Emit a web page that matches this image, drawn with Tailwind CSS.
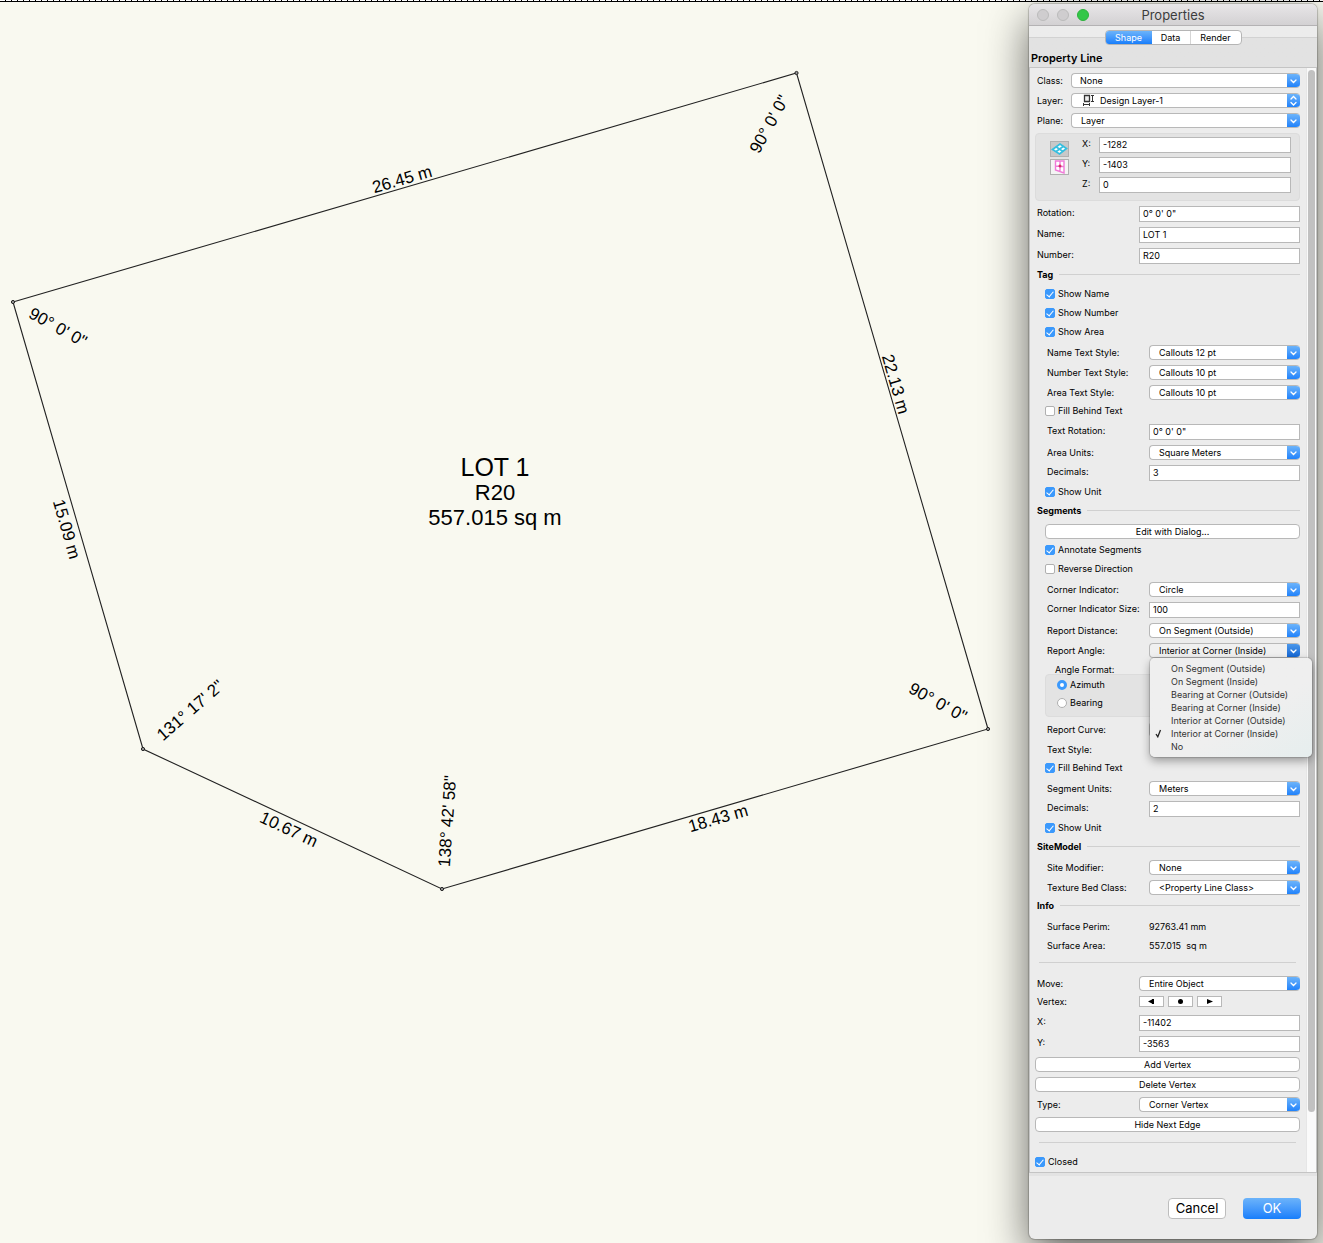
<!DOCTYPE html>
<html lang="en">
  <head>
    <meta charset="UTF-8" />
    <meta name="viewport" content="width=device-width, initial-scale=1.0" />
    <title>Properties</title>
    <script src="https://cdn.jsdelivr.net/npm/@tailwindcss/browser@4"></script>
  </head>
  <body class="min-h-screen overflow-x-hidden bg-[#f9f9f0] font-['Inter',sans-serif] text-black">
    <!-- Icons shared by the controls -->
    <svg class="hidden">
      <symbol id="chevron" viewBox="0 0 13 14">
        <path d="M4 6l2.500 2.500L9 6" fill="none" stroke="#fff" stroke-width="1.300" stroke-linecap="round" />
      </symbol>
      <symbol id="updown" viewBox="0 0 13 14">
        <path d="M4 5l2.500-2.500L9 5M4 8.500l2.500 2.500L9 8.500" fill="none" stroke="#fff" stroke-width="1.300" stroke-linecap="round" />
      </symbol>
    </svg>

    <!-- Ruler -->
    <div class="h-1">
      <svg class="block h-[2px] w-full" shape-rendering="crispEdges">
        <defs>
          <pattern id="ticks" width="6" height="2" patternUnits="userSpaceOnUse">
            <rect width="6" height="2" fill="#fff" />
            <rect x="5" width="1" height="1" />
            <rect y="1" width="6" height="1" />
          </pattern>
        </defs>
        <rect width="100%" height="2" fill="url(#ticks)" />
      </svg>
    </div>

    <div class="flex items-start">
      <!-- Drawing -->
      <main class="min-w-0 flex-1">
        <svg viewBox="0 4 1029 1235" class="block h-auto w-full font-['Liberation_Sans',Arial,sans-serif] text-[17px]">
          <path d="M13 302L796.500 73L988 729L442 889L143 749Z" fill="none" stroke="#222" stroke-width="1.100" />
          <g fill="#999" stroke="#222">
            <circle cx="13" cy="302" r="1.600" />
            <circle cx="796.500" cy="73" r="1.600" />
            <circle cx="988" cy="729" r="1.600" />
            <circle cx="442" cy="889" r="1.600" />
            <circle cx="143" cy="749" r="1.600" />
          </g>
          <g text-anchor="middle">
            <text transform="translate(402 179) rotate(-16)" dy="6">26.45 m</text>
            <text transform="translate(896 384) rotate(74)" dy="6">22.13 m</text>
            <text transform="translate(67 529) rotate(74)" dy="6">15.09 m</text>
            <text transform="translate(289 829) rotate(25)" dy="6">10.67 m</text>
            <text transform="translate(718 818) rotate(-16)" dy="6">18.43 m</text>
            <text transform="translate(58 327) rotate(29)" dy="6">90° 0' 0"</text>
            <text transform="translate(769 124) rotate(-61)" dy="6">90° 0' 0"</text>
            <text transform="translate(938 702) rotate(29)" dy="6">90° 0' 0"</text>
            <text transform="translate(190 710) rotate(-41)" dy="6">131° 17' 2"</text>
            <text transform="translate(447 821) rotate(-86)" dy="6">138° 42' 58"</text>
            <text x="495" y="476" class="text-[25px]">LOT 1</text>
            <text x="495" y="500" class="text-[22px]">R20</text>
            <text x="495" y="525" class="text-[22px]">557.015 sq m</text>
          </g>
        </svg>
      </main>

      <!-- Properties window -->
      <aside class="relative mr-[6px] mb-1 w-72 shrink-0 rounded-md bg-[#ececec] text-[9px] leading-[11px] shadow-[0_16px_44px_rgba(0,0,0,0.6),0_0_1px_1px_rgba(0,0,0,0.2)]">
        <header class="flex h-[22px] items-center rounded-t-md border-b border-[#b4b2b4] bg-linear-to-b from-[#e8e6e8] to-[#d3d1d3] px-2">
          <div class="flex flex-1 gap-2">
            <span class="size-3 rounded-full border border-[#bbb] bg-[#cfcdcf]"></span>
            <span class="size-3 rounded-full border border-[#bbb] bg-[#cfcdcf]"></span>
            <span class="size-3 rounded-full border border-[#2bb23c] bg-[#33c748]"></span>
          </div>
          <h1 class="text-[13px] leading-5 text-[#3c3c3c]">Properties</h1>
          <div class="flex-1"></div>
        </header>

        <div class="bg-linear-to-b from-[#ececec] from-[12px] to-[#e2e2e2] to-[12px]">
          <nav class="flex h-[23px] items-center">
            <span class="h-px flex-1 bg-[#d2d2d2]"></span>
            <div class="flex h-[15px] overflow-hidden rounded border border-[#b5b5b5] bg-white">
              <button class="w-[46px] bg-linear-to-b from-[#6bb3fa] to-[#157efb] text-white">Shape</button>
              <button class="w-[39px] border-r border-[#d5d5d5]">Data</button>
              <button class="w-[50px]">Render</button>
            </div>
            <span class="h-px flex-1 bg-[#d2d2d2]"></span>
          </nav>
          <h2 class="h-[18px] pl-[2px] text-[11px] font-semibold leading-[18px]">Property Line</h2>
        </div>

        <div class="flex border border-[#c4c4c4]">
          <form class="min-w-0 flex-1 pt-[5px] pr-[6px] pb-[5px] pl-[5px]">
            <div class="mb-[5px] flex h-[15px] items-center">
              <label for="class" class="w-9 pl-[2px]">Class:</label>
              <div class="flex h-[15px] flex-1 overflow-hidden rounded border border-r-0 border-[#b8b8b8] bg-white">
                <select id="class" class="min-w-0 flex-1 appearance-none pl-2"><option>None</option></select>
                <svg class="h-[14px] w-[13px] bg-linear-to-b from-[#6bb3fa] to-[#157efb]"><use href="#chevron" /></svg>
              </div>
            </div>
            <div class="mb-[5px] flex h-[15px] items-center">
              <label for="layer" class="w-9 pl-[2px]">Layer:</label>
              <div class="flex h-[15px] flex-1 overflow-hidden rounded border border-r-0 border-[#b8b8b8] bg-white">
                <svg class="ml-[10px] h-3 w-3" viewBox="0 0 12 12" fill="none" stroke="#333">
                  <path d="M2.500 1.500h5v6h-5z" fill="#eee" stroke-width="1.300" />
                  <path d="M10.500 1v7M9 1.500h3M9 7.500h3M1 10.500h7M1.500 9v3M7.500 9v3" />
                </svg>
                <select id="layer" class="min-w-0 flex-1 appearance-none pl-[6px]"><option>Design Layer-1</option></select>
                <svg class="h-[14px] w-[13px] bg-linear-to-b from-[#6bb3fa] to-[#157efb]"><use href="#updown" /></svg>
              </div>
            </div>
            <div class="mb-[5px] flex h-[15px] items-center">
              <label for="plane" class="w-9 pl-[2px]">Plane:</label>
              <div class="flex h-[15px] flex-1 overflow-hidden rounded border border-r-0 border-[#b8b8b8] bg-white">
                <select id="plane" class="min-w-0 flex-1 appearance-none pl-[9px]"><option>Layer</option></select>
                <svg class="h-[14px] w-[13px] bg-linear-to-b from-[#6bb3fa] to-[#157efb]"><use href="#chevron" /></svg>
              </div>
            </div>

            <!-- Position -->
            <div class="mb-[5px] flex h-[68px] rounded border border-[#dcdcdc] bg-[#e3e3e3] pt-[3px] pr-2 pl-[14px]">
              <div class="flex w-8 flex-col gap-[2px] pt-1">
                <button type="button" aria-label="Layer plane" class="h-4 w-[19px] border border-[#b0b0b0] bg-[#c8c8c8]">
                  <svg class="h-[14px] w-[17px]" viewBox="0 0 17 14">
                    <path d="M1.500 7.500L9 2l6.500 4.500L8.500 12z" fill="#fff" stroke="#35bfe0" stroke-width="1.700" />
                    <path d="M5 4.800l7 4.700M12.500 4.200L4.800 9.700" stroke="#35bfe0" stroke-width="1.700" />
                  </svg>
                </button>
                <button type="button" aria-label="Screen plane" class="h-4 w-[19px] border border-[#b0b0b0] bg-[#f4f4f4]">
                  <svg class="h-[14px] w-[17px]" viewBox="0 0 17 14">
                    <path d="M4.500 1h8.500v12l-8.500-3zM9 1v11M4.500 6L13 6.500" fill="#fff" stroke="#f07ad8" stroke-width="1.400" />
                    <path d="M7.500 6h3M9 4.500v3" stroke="#d0103c" />
                  </svg>
                </button>
              </div>
              <div class="flex flex-1 flex-col gap-1">
                <div class="flex h-4 leading-[14px]"><label for="px" class="w-[17px]">X:</label><input id="px" value="-1282" class="h-4 min-w-0 flex-1 border border-[#b8b8b8] bg-white px-[3px] pb-[2px] leading-3" /></div>
                <div class="flex h-4 leading-[14px]"><label for="py" class="w-[17px]">Y:</label><input id="py" value="-1403" class="h-4 min-w-0 flex-1 border border-[#b8b8b8] bg-white px-[3px] pb-[2px] leading-3" /></div>
                <div class="flex h-4 leading-[14px]"><label for="pz" class="w-[17px]">Z:</label><input id="pz" value="0" class="h-4 min-w-0 flex-1 border border-[#b8b8b8] bg-white px-[3px] pb-[2px] leading-3" /></div>
              </div>
            </div>

            <div class="mb-[5px] flex h-4 leading-[14px]"><label for="rotation" class="w-[104px] pl-[2px]">Rotation:</label><input id="rotation" value="0° 0' 0&quot;" class="h-4 min-w-0 flex-1 border border-[#b8b8b8] bg-white px-[3px] pb-[2px] leading-3" /></div>
            <div class="mb-[5px] flex h-4 leading-[14px]"><label for="name" class="w-[104px] pl-[2px]">Name:</label><input id="name" value="LOT 1" class="h-4 min-w-0 flex-1 border border-[#b8b8b8] bg-white px-[3px] pb-[2px] leading-3" /></div>
            <div class="mb-[5px] flex h-4 leading-[14px]"><label for="number" class="w-[104px] pl-[2px]">Number:</label><input id="number" value="R20" class="h-4 min-w-0 flex-1 border border-[#b8b8b8] bg-white px-[3px] pb-[2px] leading-3" /></div>

            <!-- Tag -->
            <h3 class="mb-2 flex h-[11px] items-center gap-[6px] pl-[2px] font-bold">Tag <span class="h-px flex-1 bg-[#d0d0d0]"></span></h3>
            <label class="mb-2 ml-[10px] flex h-[11px] items-center gap-[3px]"><input type="checkbox" checked class="flex size-[10px] appearance-none justify-center rounded-[2px] border border-[#b0b0b0] bg-white checked:border-[#3b99fc] checked:bg-[#3b99fc] checked:before:h-[7px] checked:before:w-1 checked:before:rotate-40 checked:before:border-r checked:before:border-b checked:before:border-white checked:before:content-['']" />Show Name</label>
            <label class="mb-2 ml-[10px] flex h-[11px] items-center gap-[3px]"><input type="checkbox" checked class="flex size-[10px] appearance-none justify-center rounded-[2px] border border-[#b0b0b0] bg-white checked:border-[#3b99fc] checked:bg-[#3b99fc] checked:before:h-[7px] checked:before:w-1 checked:before:rotate-40 checked:before:border-r checked:before:border-b checked:before:border-white checked:before:content-['']" />Show Number</label>
            <label class="mb-2 ml-[10px] flex h-[11px] items-center gap-[3px]"><input type="checkbox" checked class="flex size-[10px] appearance-none justify-center rounded-[2px] border border-[#b0b0b0] bg-white checked:border-[#3b99fc] checked:bg-[#3b99fc] checked:before:h-[7px] checked:before:w-1 checked:before:rotate-40 checked:before:border-r checked:before:border-b checked:before:border-white checked:before:content-['']" />Show Area</label>
            <div class="mb-[5px] flex h-[15px] items-center">
              <label for="name-style" class="w-[114px] pl-3">Name Text Style:</label>
              <div class="flex h-[15px] flex-1 overflow-hidden rounded border border-r-0 border-[#b8b8b8] bg-white">
                <select id="name-style" class="min-w-0 flex-1 appearance-none pl-[9px]"><option>Callouts 12 pt</option></select>
                <svg class="h-[14px] w-[13px] bg-linear-to-b from-[#6bb3fa] to-[#157efb]"><use href="#chevron" /></svg>
              </div>
            </div>
            <div class="mb-[5px] flex h-[15px] items-center">
              <label for="number-style" class="w-[114px] pl-3">Number Text Style:</label>
              <div class="flex h-[15px] flex-1 overflow-hidden rounded border border-r-0 border-[#b8b8b8] bg-white">
                <select id="number-style" class="min-w-0 flex-1 appearance-none pl-[9px]"><option>Callouts 10 pt</option></select>
                <svg class="h-[14px] w-[13px] bg-linear-to-b from-[#6bb3fa] to-[#157efb]"><use href="#chevron" /></svg>
              </div>
            </div>
            <div class="mb-[5px] flex h-[15px] items-center">
              <label for="area-style" class="w-[114px] pl-3">Area Text Style:</label>
              <div class="flex h-[15px] flex-1 overflow-hidden rounded border border-r-0 border-[#b8b8b8] bg-white">
                <select id="area-style" class="min-w-0 flex-1 appearance-none pl-[9px]"><option>Callouts 10 pt</option></select>
                <svg class="h-[14px] w-[13px] bg-linear-to-b from-[#6bb3fa] to-[#157efb]"><use href="#chevron" /></svg>
              </div>
            </div>
            <label class="mb-2 ml-[10px] flex h-[11px] items-center gap-[3px]"><input type="checkbox" class="flex size-[10px] appearance-none justify-center rounded-[2px] border border-[#b0b0b0] bg-white checked:border-[#3b99fc] checked:bg-[#3b99fc] checked:before:h-[7px] checked:before:w-1 checked:before:rotate-40 checked:before:border-r checked:before:border-b checked:before:border-white checked:before:content-['']" />Fill Behind Text</label>
            <div class="mb-[5px] flex h-4 leading-[14px]"><label for="text-rotation" class="w-[114px] pl-3">Text Rotation:</label><input id="text-rotation" value="0° 0' 0&quot;" class="h-4 min-w-0 flex-1 border border-[#b8b8b8] bg-white px-[3px] pb-[2px] leading-3" /></div>
            <div class="mb-[5px] flex h-[15px] items-center">
              <label for="area-units" class="w-[114px] pl-3">Area Units:</label>
              <div class="flex h-[15px] flex-1 overflow-hidden rounded border border-r-0 border-[#b8b8b8] bg-white">
                <select id="area-units" class="min-w-0 flex-1 appearance-none pl-[9px]"><option>Square Meters</option></select>
                <svg class="h-[14px] w-[13px] bg-linear-to-b from-[#6bb3fa] to-[#157efb]"><use href="#chevron" /></svg>
              </div>
            </div>
            <div class="mb-[5px] flex h-4 leading-[14px]"><label for="area-decimals" class="w-[114px] pl-3">Decimals:</label><input id="area-decimals" value="3" class="h-4 min-w-0 flex-1 border border-[#b8b8b8] bg-white px-[3px] pb-[2px] leading-3" /></div>
            <label class="mb-2 ml-[10px] flex h-[11px] items-center gap-[3px]"><input type="checkbox" checked class="flex size-[10px] appearance-none justify-center rounded-[2px] border border-[#b0b0b0] bg-white checked:border-[#3b99fc] checked:bg-[#3b99fc] checked:before:h-[7px] checked:before:w-1 checked:before:rotate-40 checked:before:border-r checked:before:border-b checked:before:border-white checked:before:content-['']" />Show Unit</label>

            <!-- Segments -->
            <h3 class="mb-2 flex h-[11px] items-center gap-[6px] pl-[2px] font-bold">Segments <span class="h-px flex-1 bg-[#d0d0d0]"></span></h3>
            <div class="mb-[5px] flex pl-[10px]"><button type="button" class="h-[15px] flex-1 rounded border border-[#b8b8b8] bg-white">Edit with Dialog...</button></div>
            <label class="mb-2 ml-[10px] flex h-[11px] items-center gap-[3px]"><input type="checkbox" checked class="flex size-[10px] appearance-none justify-center rounded-[2px] border border-[#b0b0b0] bg-white checked:border-[#3b99fc] checked:bg-[#3b99fc] checked:before:h-[7px] checked:before:w-1 checked:before:rotate-40 checked:before:border-r checked:before:border-b checked:before:border-white checked:before:content-['']" />Annotate Segments</label>
            <label class="mb-2 ml-[10px] flex h-[11px] items-center gap-[3px]"><input type="checkbox" class="flex size-[10px] appearance-none justify-center rounded-[2px] border border-[#b0b0b0] bg-white checked:border-[#3b99fc] checked:bg-[#3b99fc] checked:before:h-[7px] checked:before:w-1 checked:before:rotate-40 checked:before:border-r checked:before:border-b checked:before:border-white checked:before:content-['']" />Reverse Direction</label>
            <div class="mb-[5px] flex h-[15px] items-center">
              <label for="corner" class="w-[114px] pl-3">Corner Indicator:</label>
              <div class="flex h-[15px] flex-1 overflow-hidden rounded border border-r-0 border-[#b8b8b8] bg-white">
                <select id="corner" class="min-w-0 flex-1 appearance-none pl-[9px]"><option>Circle</option></select>
                <svg class="h-[14px] w-[13px] bg-linear-to-b from-[#6bb3fa] to-[#157efb]"><use href="#chevron" /></svg>
              </div>
            </div>
            <div class="mb-[5px] flex h-4 leading-[14px]"><label for="corner-size" class="w-[114px] pl-3 whitespace-nowrap">Corner Indicator Size:</label><input id="corner-size" value="100" class="h-4 min-w-0 flex-1 border border-[#b8b8b8] bg-white px-[3px] pb-[2px] leading-3" /></div>
            <div class="mb-[5px] flex h-[15px] items-center">
              <label for="distance" class="w-[114px] pl-3">Report Distance:</label>
              <div class="flex h-[15px] flex-1 overflow-hidden rounded border border-r-0 border-[#b8b8b8] bg-white">
                <select id="distance" class="min-w-0 flex-1 appearance-none pl-[9px]"><option>On Segment (Outside)</option></select>
                <svg class="h-[14px] w-[13px] bg-linear-to-b from-[#6bb3fa] to-[#157efb]"><use href="#chevron" /></svg>
              </div>
            </div>
            <div class="mb-[5px] flex h-[15px] items-center">
              <label for="angle" class="w-[114px] pl-3">Report Angle:</label>
              <div class="relative flex-1">
                <div class="flex h-[15px] overflow-hidden rounded border border-r-0 border-[#b8b8b8] bg-[#f0f0f0]">
                  <select id="angle" class="min-w-0 flex-1 appearance-none pl-[9px]"><option>Interior at Corner (Inside)</option></select>
                  <svg class="h-[14px] w-[13px] bg-linear-to-b from-[#4a97ea] to-[#0d62d2]"><use href="#chevron" /></svg>
                </div>
                <!-- Open menu of the angle list -->
                <ul class="absolute top-[15px] -right-3 left-px z-10 rounded-[5px] bg-linear-to-br from-[#efefef] from-60% to-[#e6eeee] py-1 leading-[13px] whitespace-nowrap text-[#333] shadow-[0_4px_10px_rgba(0,0,0,0.35),0_0_1px_1px_rgba(0,0,0,0.15)]">
                  <li class="pl-[21px]">On Segment (Outside)</li>
                  <li class="pl-[21px]">On Segment (Inside)</li>
                  <li class="pl-[21px]">Bearing at Corner (Outside)</li>
                  <li class="pl-[21px]">Bearing at Corner (Inside)</li>
                  <li class="pl-[21px]">Interior at Corner (Outside)</li>
                  <li class="flex items-center pl-[5px]">
                    <svg class="mr-[9px] h-[9px] w-[7px]" viewBox="0 0 7 9"><path d="M1 5l1.800 2.800L5.500 1" fill="none" stroke="#222" stroke-width="1.300" /></svg>
                    Interior at Corner (Inside)
                  </li>
                  <li class="pl-[21px]">No</li>
                </ul>
              </div>
            </div>
            <fieldset class="mb-[5px] ml-[10px]">
              <legend class="h-[11px] pl-[10px] leading-[14px]">Angle Format:</legend>
              <div class="flex h-[43px] flex-col gap-[7px] rounded border border-[#dcdcdc] bg-[#e3e3e3] pt-1 pl-[11px]">
                <label class="flex h-[11px] items-center gap-[3px]"><input type="radio" name="format" checked class="size-[10px] appearance-none rounded-full border border-[#b0b0b0] bg-white checked:border-[3px] checked:border-[#3b99fc]" />Azimuth</label>
                <label class="flex h-[11px] items-center gap-[3px]"><input type="radio" name="format" class="size-[10px] appearance-none rounded-full border border-[#b0b0b0] bg-white checked:border-[3px] checked:border-[#3b99fc]" />Bearing</label>
              </div>
            </fieldset>
            <div class="mb-[5px] flex h-[15px] items-center">
              <label for="curve" class="w-[114px] pl-3">Report Curve:</label>
              <div class="flex h-[15px] flex-1 overflow-hidden rounded border border-r-0 border-[#b8b8b8] bg-white">
                <select id="curve" class="min-w-0 flex-1 appearance-none pl-[9px]"><option></option></select>
                <svg class="h-[14px] w-[13px] bg-linear-to-b from-[#6bb3fa] to-[#157efb]"><use href="#chevron" /></svg>
              </div>
            </div>
            <p class="mb-[5px] h-[15px] pl-3 leading-[15px]">Text Style:</p>
            <label class="mb-2 ml-[10px] flex h-[11px] items-center gap-[3px]"><input type="checkbox" checked class="flex size-[10px] appearance-none justify-center rounded-[2px] border border-[#b0b0b0] bg-white checked:border-[#3b99fc] checked:bg-[#3b99fc] checked:before:h-[7px] checked:before:w-1 checked:before:rotate-40 checked:before:border-r checked:before:border-b checked:before:border-white checked:before:content-['']" />Fill Behind Text</label>
            <div class="mb-[5px] flex h-[15px] items-center">
              <label for="segment-units" class="w-[114px] pl-3">Segment Units:</label>
              <div class="flex h-[15px] flex-1 overflow-hidden rounded border border-r-0 border-[#b8b8b8] bg-white">
                <select id="segment-units" class="min-w-0 flex-1 appearance-none pl-[9px]"><option>Meters</option></select>
                <svg class="h-[14px] w-[13px] bg-linear-to-b from-[#6bb3fa] to-[#157efb]"><use href="#chevron" /></svg>
              </div>
            </div>
            <div class="mb-[5px] flex h-4 leading-[14px]"><label for="segment-decimals" class="w-[114px] pl-3">Decimals:</label><input id="segment-decimals" value="2" class="h-4 min-w-0 flex-1 border border-[#b8b8b8] bg-white px-[3px] pb-[2px] leading-3" /></div>
            <label class="mb-2 ml-[10px] flex h-[11px] items-center gap-[3px]"><input type="checkbox" checked class="flex size-[10px] appearance-none justify-center rounded-[2px] border border-[#b0b0b0] bg-white checked:border-[#3b99fc] checked:bg-[#3b99fc] checked:before:h-[7px] checked:before:w-1 checked:before:rotate-40 checked:before:border-r checked:before:border-b checked:before:border-white checked:before:content-['']" />Show Unit</label>

            <!-- Site model -->
            <h3 class="mb-2 flex h-[11px] items-center gap-[6px] pl-[2px] font-bold">SiteModel <span class="h-px flex-1 bg-[#d0d0d0]"></span></h3>
            <div class="mb-[5px] flex h-[15px] items-center">
              <label for="modifier" class="w-[114px] pl-3">Site Modifier:</label>
              <div class="flex h-[15px] flex-1 overflow-hidden rounded border border-r-0 border-[#b8b8b8] bg-white">
                <select id="modifier" class="min-w-0 flex-1 appearance-none pl-[9px]"><option>None</option></select>
                <svg class="h-[14px] w-[13px] bg-linear-to-b from-[#6bb3fa] to-[#157efb]"><use href="#chevron" /></svg>
              </div>
            </div>
            <div class="mb-[5px] flex h-[15px] items-center">
              <label for="texture" class="w-[114px] pl-3">Texture Bed Class:</label>
              <div class="flex h-[15px] flex-1 overflow-hidden rounded border border-r-0 border-[#b8b8b8] bg-white">
                <select id="texture" class="min-w-0 flex-1 appearance-none pl-[9px]"><option>&lt;Property Line Class&gt;</option></select>
                <svg class="h-[14px] w-[13px] bg-linear-to-b from-[#6bb3fa] to-[#157efb]"><use href="#chevron" /></svg>
              </div>
            </div>

            <!-- Info -->
            <h3 class="mb-2 flex h-[11px] items-center gap-[6px] pl-[2px] font-bold">Info <span class="h-px flex-1 bg-[#d0d0d0]"></span></h3>
            <dl class="leading-4">
              <div class="mb-[3px] flex"><dt class="w-[114px] pl-3">Surface Perim:</dt><dd>92763.41 mm</dd></div>
              <div class="flex"><dt class="w-[114px] pl-3">Surface Area:</dt><dd class="whitespace-pre">557.015  sq m</dd></div>
            </dl>
            <hr class="mx-1 mt-2 mb-[13px] border-[#d0d0d0]" />

            <!-- Vertices -->
            <div class="mb-[5px] flex h-[15px] items-center">
              <label for="move" class="w-[104px] pl-[2px]">Move:</label>
              <div class="flex h-[15px] flex-1 overflow-hidden rounded border border-r-0 border-[#b8b8b8] bg-white">
                <select id="move" class="min-w-0 flex-1 appearance-none pl-[9px]"><option>Entire Object</option></select>
                <svg class="h-[14px] w-[13px] bg-linear-to-b from-[#6bb3fa] to-[#157efb]"><use href="#chevron" /></svg>
              </div>
            </div>
            <div class="mb-2 flex h-[11px] items-center">
              <span class="w-[104px] pl-[2px]">Vertex:</span>
              <div class="flex gap-1">
                <button type="button" aria-label="Previous vertex" class="flex h-[11px] w-[25px] items-center justify-center border border-[#b8b8b8] bg-white"><svg class="h-[7px] w-[7px]" viewBox="0 0 7 7"><path d="M0 3.500L4 1.500V1H6V6H4V5.500z" /></svg></button>
                <button type="button" aria-label="Mark vertex" class="flex h-[11px] w-[25px] items-center justify-center border border-[#b8b8b8] bg-white"><svg class="h-[7px] w-[7px]" viewBox="0 0 7 7"><circle cx="3.500" cy="3.500" r="2.500" /></svg></button>
                <button type="button" aria-label="Next vertex" class="flex h-[11px] w-[25px] items-center justify-center border border-[#b8b8b8] bg-white"><svg class="h-[7px] w-[7px]" viewBox="0 0 7 7"><path d="M1 1L7 3.500L1 6z" /></svg></button>
              </div>
            </div>
            <div class="mb-[5px] flex h-4 leading-[14px]"><label for="vx" class="w-[104px] pl-[2px]">X:</label><input id="vx" value="-11402" class="h-4 min-w-0 flex-1 border border-[#b8b8b8] bg-white px-[3px] pb-[2px] leading-3" /></div>
            <div class="mb-[5px] flex h-4 leading-[14px]"><label for="vy" class="w-[104px] pl-[2px]">Y:</label><input id="vy" value="-3563" class="h-4 min-w-0 flex-1 border border-[#b8b8b8] bg-white px-[3px] pb-[2px] leading-3" /></div>
            <button type="button" class="mb-[5px] block h-[15px] w-full rounded border border-[#b8b8b8] bg-white">Add Vertex</button>
            <button type="button" class="mb-[5px] block h-[15px] w-full rounded border border-[#b8b8b8] bg-white">Delete Vertex</button>
            <div class="mb-[5px] flex h-[15px] items-center">
              <label for="type" class="w-[104px] pl-[2px]">Type:</label>
              <div class="flex h-[15px] flex-1 overflow-hidden rounded border border-r-0 border-[#b8b8b8] bg-white">
                <select id="type" class="min-w-0 flex-1 appearance-none pl-[9px]"><option>Corner Vertex</option></select>
                <svg class="h-[14px] w-[13px] bg-linear-to-b from-[#6bb3fa] to-[#157efb]"><use href="#chevron" /></svg>
              </div>
            </div>
            <button type="button" class="block h-[15px] w-full rounded border border-[#b8b8b8] bg-white">Hide Next Edge</button>
            <hr class="mx-1 mt-[10px] mb-[13px] border-[#d0d0d0]" />
            <label class="flex h-[11px] items-center gap-[3px]"><input type="checkbox" checked class="flex size-[10px] appearance-none justify-center rounded-[2px] border border-[#b0b0b0] bg-white checked:border-[#3b99fc] checked:bg-[#3b99fc] checked:before:h-[7px] checked:before:w-1 checked:before:rotate-40 checked:before:border-r checked:before:border-b checked:before:border-white checked:before:content-['']" />Closed</label>
          </form>

          <!-- Scrollbar -->
          <div class="flex w-[10px] flex-col border-l border-[#e6e6e6] bg-[#fafafa] px-px pt-[2px] pb-[60px]">
            <div class="flex-1 rounded-full bg-[#c1c1c1]"></div>
          </div>
        </div>

        <footer class="flex h-[66px] items-start justify-end gap-[17px] border-t-[3px] border-[#e3e3e3] pt-[22px] pr-4 text-[13px]">
          <button class="h-[21px] w-[58px] rounded border border-[#bdbdbd] bg-white">Cancel</button>
          <button class="h-[21px] w-[58px] rounded bg-linear-to-b from-[#6bb3fa] to-[#157efb] text-white">OK</button>
        </footer>
      </aside>
    </div>
  </body>
</html>
